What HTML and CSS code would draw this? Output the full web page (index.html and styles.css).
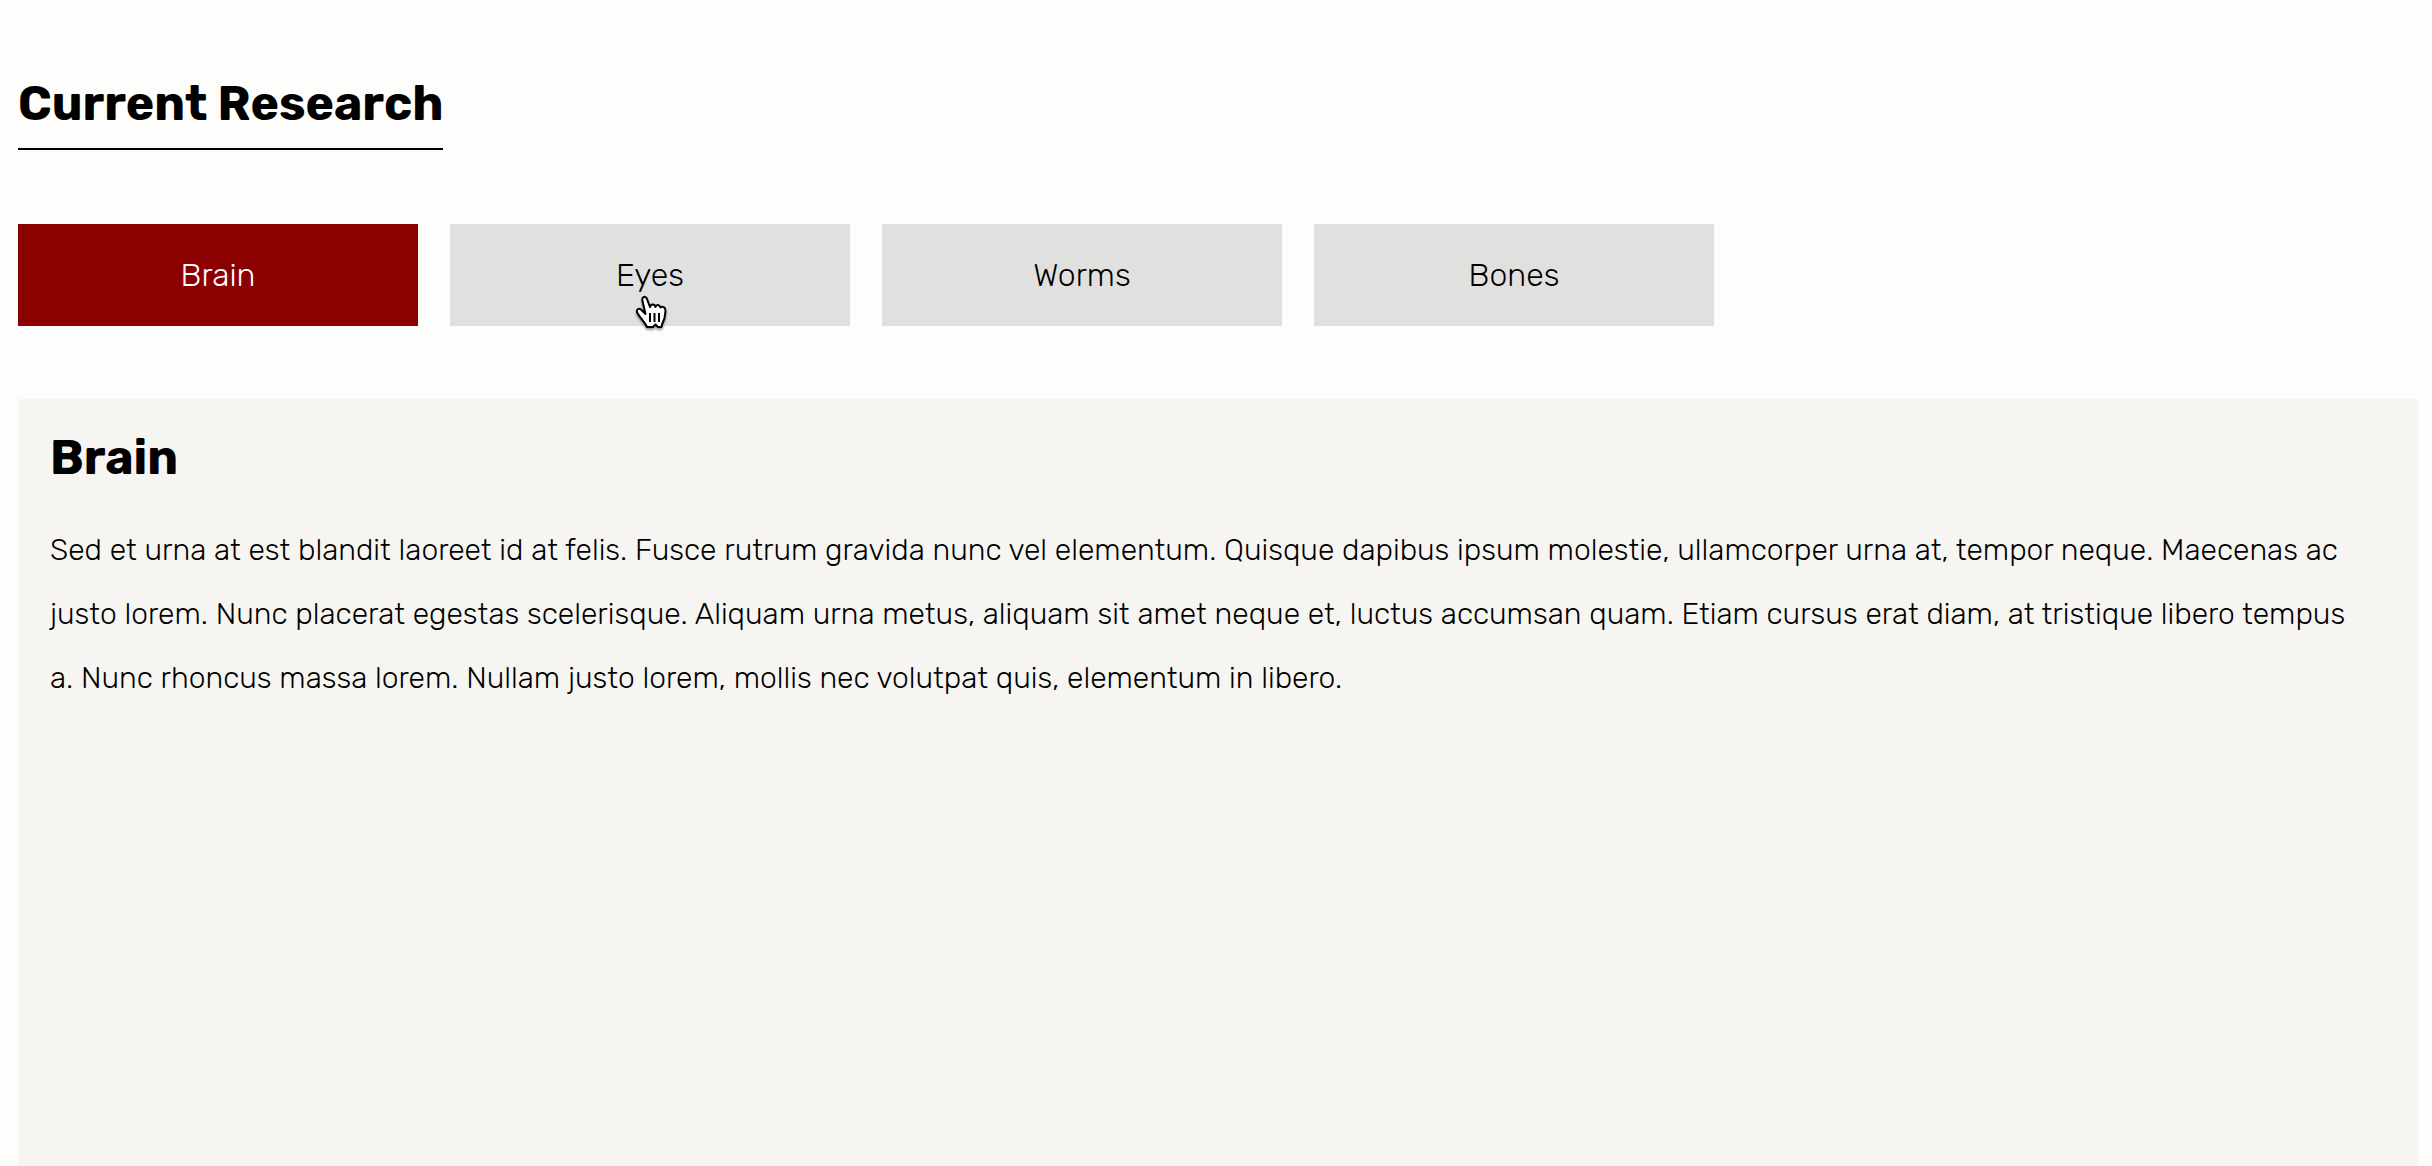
FILE: index.html
```html
<!DOCTYPE html>
<html lang="en">
<head>
<meta charset="utf-8">
<title>Current Research</title>
<link rel="stylesheet" href="styles.css">
</head>
<body>
<main class="research">
  <h1 class="research-title">Current Research</h1>
  <div class="tabs" role="tablist" aria-label="Research areas">
    <button class="tab tab-active" type="button" role="tab" aria-selected="true" aria-controls="panel-brain" id="tab-brain">Brain</button>
    <button class="tab" type="button" role="tab" aria-selected="false">Eyes
      <svg class="pointer" viewBox="0 0 32 36" aria-hidden="true">
        <path class="pointer-hand" d="M10.500 19L7.500 6C6.500 1.500 10.500 0.500 12 4L15 12C16 8.500 20 9 20.500 12C21.500 9 24.500 9.500 25.500 12.500C27.500 11 30.500 12 30.500 16L29.500 23C28.500 26.500 27 28 26.500 32H23L20.500 29.500L18 32H12C10 27.500 6 24 3 19C0 14.500 4 12 7 15.500Z"/>
        <path class="pointer-lines" d="M15 18V27M19.500 18V27M24 18V27"/>
      </svg>
    </button>
    <button class="tab" type="button" role="tab" aria-selected="false">Worms</button>
    <button class="tab" type="button" role="tab" aria-selected="false">Bones</button>
  </div>
  <section class="panel" role="tabpanel" id="panel-brain" aria-labelledby="tab-brain">
    <h2 class="panel-title">Brain</h2>
    <p class="panel-text">Sed et urna at est blandit laoreet id at felis. Fusce rutrum gravida nunc vel elementum. Quisque dapibus ipsum molestie, ullamcorper urna at, tempor neque. Maecenas ac justo lorem. Nunc placerat egestas scelerisque. Aliquam urna metus, aliquam sit amet neque et, luctus accumsan quam. Etiam cursus erat diam, at tristique libero tempus a. Nunc rhoncus massa lorem. Nullam justo lorem, mollis nec volutpat quis, elementum in libero.</p>
  </section>
</main>
</body>
</html>
```
FILE: styles.css
```css
* {
  box-sizing: border-box;
}

body {
  margin: 0;
  background: #fdfdfb;
  color: #000;
  font-family: Rubik, Roboto, sans-serif;
  font-weight: 300;
}

.research {
  display: flex;
  flex-direction: column;
  align-items: flex-start;
  min-height: 100vh;
  padding: 75px 14px 0 18px;
}

.research-title,
.panel-title {
  margin: 0;
  font-size: 48px;
  font-weight: 700;
  line-height: 57px;
}

.research-title {
  padding-bottom: 16px;
  border-bottom: 2px solid #000;
}

.tabs {
  display: flex;
  flex-wrap: wrap;
  gap: 32px;
  margin: 74px 0 73px;
}

.tab {
  position: relative;
  width: 400px;
  padding: 32px;
  border: 0;
  background: #e0e0df;
  color: #000;
  font: inherit;
  font-size: 32px;
  line-height: 38px;
  cursor: pointer;
}

.tab-active {
  background: #8b0000;
  color: #fff;
}

.pointer {
  position: absolute;
  left: 185px;
  top: 71px;
  width: 32px;
  height: 36px;
  filter: drop-shadow(0 2px 1px #0006);
}

.pointer-hand {
  fill: #fff;
  stroke: #000;
  stroke-width: 2;
  stroke-linejoin: round;
}

.pointer-lines {
  fill: none;
  stroke: #000;
  stroke-width: 2;
}

.panel {
  flex: 1;
  align-self: stretch;
  padding: 30px 48px 32px 32px;
  background: #f6f5f1;
}

.panel-text {
  margin: 32px 0 0;
  font-size: 30px;
  line-height: 64px;
}
```
